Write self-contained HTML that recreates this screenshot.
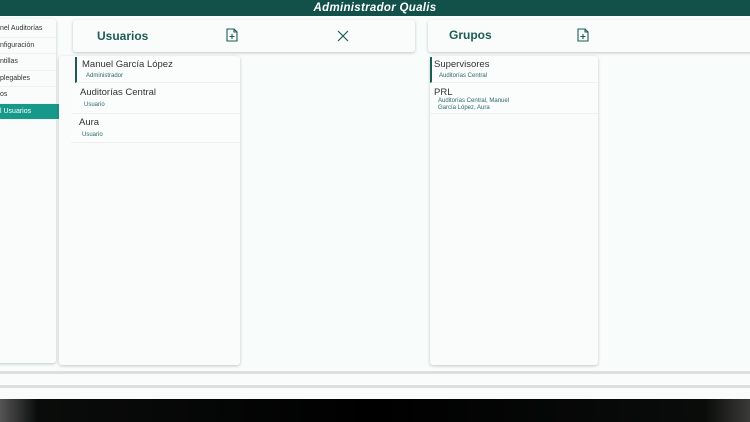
<!DOCTYPE html>
<html><head><style>
*{margin:0;padding:0;box-sizing:border-box}
body{width:750px;height:422px;overflow:hidden;background:#f8fdfb;font-family:"Liberation Sans","DejaVu Sans",sans-serif;position:relative}
.hdr{position:absolute;left:0;top:0;width:750px;height:16px;background:#12504a;color:#fff;font-weight:bold;font-style:italic;font-size:11.5px;text-align:center;line-height:17px;letter-spacing:.3px}
.card{position:absolute;background:#fafcfb;border-radius:3px;box-shadow:0 1px 3px rgba(0,0,0,.22)}
.side div{height:16.5px;font-size:7px;color:#333;line-height:16px;padding-left:0;border-bottom:1px solid #eef2f1}
.side .act{background:#16998a;color:#fff;width:79px}
.h{font-weight:bold;color:#1d5c55;font-size:12px;position:absolute}
.it{position:absolute;left:0;right:0;background:#fbfcfc;border-bottom:1px solid #eef1f0}
.n{font-size:9.5px;color:#333;position:absolute}
.s{font-size:6px;color:#2a6a68;position:absolute;line-height:7px}
.ln{position:absolute;left:0;width:750px;height:3px;background:#dcdfde}
</style></head><body>
<div class="hdr">Administrador Qualis</div>
<div class="card side" style="left:-10px;top:19px;width:66px;height:344px;padding-top:2px">
<div style="padding-left:10px">nel Auditorías</div>
<div style="padding-left:10px">nfiguración</div>
<div style="padding-left:10px">ntillas</div>
<div style="padding-left:10px">plegables</div>
<div style="padding-left:10px">os</div>
<div class="act" style="padding-left:10px">l Usuarios</div>
</div>
<div class="card" style="left:73px;top:20px;width:342px;height:32px">
<div class="h" style="left:24px;top:9px">Usuarios</div>
<svg style="position:absolute;left:153px;top:8px" width="12" height="14" viewBox="0 0 12 14" fill="none" stroke="#1d5c55" stroke-width="1.1"><path d="M1 1h7l3 3v9H1z M8 1v3h3 M6 6v5 M3.5 8.5h5"/></svg>
<svg style="position:absolute;left:264px;top:10px" width="12" height="12" viewBox="0 0 12 12" stroke="#1d5c55" stroke-width="1.2"><path d="M1 1l10 10M11 1L1 11"/></svg>
</div>
<div class="card" style="left:428px;top:20px;width:330px;height:32px">
<div class="h" style="left:21px;top:8px">Grupos</div>
<svg style="position:absolute;left:149px;top:8px" width="12" height="14" viewBox="0 0 12 14" fill="none" stroke="#1d5c55" stroke-width="1.1"><path d="M1 1h7l3 3v9H1z M8 1v3h3 M6 6v5 M3.5 8.5h5"/></svg>
</div>
<div class="card" style="left:59px;top:56px;width:181px;height:309px">
<div class="it" style="top:1px;height:26px;border-left:2px solid #1d5c55;margin-left:16px"><div class="n" style="left:5px;top:2px">Manuel García López</div><div class="s" style="left:9px;top:16px">Administrador</div></div>
<div class="it" style="top:27px;height:31px;left:14px"><div class="n" style="left:7px;top:4px">Auditorías Central</div><div class="s" style="left:11px;top:19px">Usuario</div></div>
<div class="it" style="top:58px;height:29px;left:12px"><div class="n" style="left:8px;top:3px">Aura</div><div class="s" style="left:11px;top:18px">Usuario</div></div>
</div>
<div class="card" style="left:430px;top:56px;width:168px;height:309px">
<div class="it" style="top:1px;height:26px;border-left:2px solid #1d5c55"><div class="n" style="left:2px;top:2px">Supervisores</div><div class="s" style="left:7px;top:16px">Auditorías Central</div></div>
<div class="it" style="top:27px;height:31px"><div class="n" style="left:4px;top:4px">PRL</div><div class="s" style="left:8px;top:15px">Auditorías Central, Manuel<br>García López, Aura</div></div>
</div>
<div class="ln" style="top:371px"></div>
<div class="ln" style="top:385px"></div>
<div style="position:absolute;left:0;top:399px;width:750px;height:23px;background:linear-gradient(90deg,#555 0%,#0a0c0b 5%,#000 50%,#0a0c0b 94%,#3a3a38 100%)"></div>
</body></html>
